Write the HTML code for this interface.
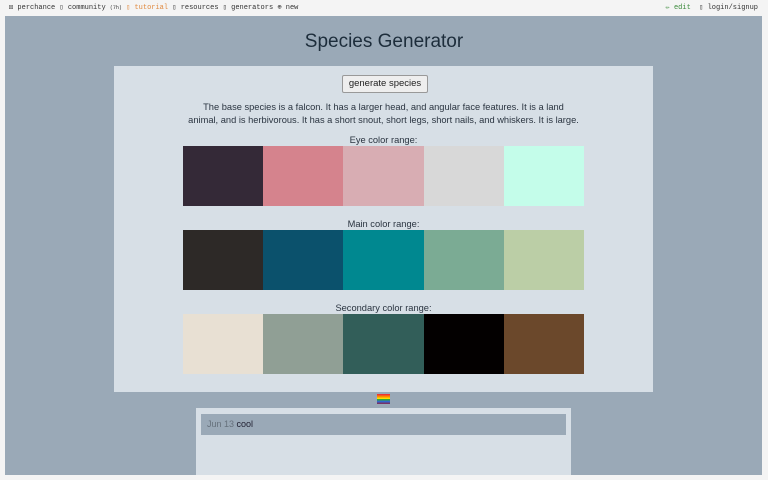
<!DOCTYPE html><html><head><style>
body{margin:0;width:768px;height:480px;background:#f4f4f4;font-family:"Liberation Sans",sans-serif;position:relative;overflow:hidden}
.nav{position:absolute;top:0;left:0;width:768px;height:16px;font-family:"Liberation Mono",monospace;font-size:7px;line-height:16px;color:#333;white-space:nowrap}
.nav span{white-space:nowrap}
.main{position:absolute;left:5px;top:16px;width:757px;height:459px;background:#9aa9b7}
h1{position:absolute;top:31px;left:0;width:768px;text-align:center;margin:0;font-weight:normal;font-size:19px;color:#1d2d3b}
.panel{position:absolute;left:114px;top:66px;width:539px;height:326px;background:#d7dfe6}
.btn{position:absolute;left:342px;top:75px;width:84px;height:16px;border:1px solid #999;background:#eee;border-radius:2px;font-size:9.5px;text-align:center;line-height:16px;color:#222}
.t{position:absolute;left:114px;width:539px;text-align:center;font-size:9.3px;color:#2a3440;line-height:13px}
.row{position:absolute;left:183px;display:flex;height:60px}
.row div{width:80.2px;height:60px}
</style></head><body>
<div class="nav"><span style="position:absolute;left:9px">⚄ perchance ▯ community <span style="font-size:5px">(7h)</span> <span style="color:#e08a40">▯ tutorial</span> ▯ resources ▯ generators ⊕ new</span><span style="position:absolute;right:10px"><span style="color:#3a8a3a">✏ edit</span> &nbsp;▯ login/signup</span></div>
<div class="main"></div>
<h1>Species Generator</h1>
<div class="panel"></div>
<div class="btn">generate species</div>
<div class="t" style="top:101px">The base species is a falcon. It has a larger head, and angular face features. It is a land<br>animal, and is herbivorous. It has a short snout, short legs, short nails, and whiskers. It is large.</div>
<div class="t" style="top:134px">Eye color range:</div>
<div class="row" style="top:146px"><div style="background:#342937"></div><div style="background:#d5838d"></div><div style="background:#d8adb3"></div><div style="background:#d8d8d8"></div><div style="background:#c4fdea"></div></div>
<div class="t" style="top:218px">Main color range:</div>
<div class="row" style="top:230px"><div style="background:#2d2927"></div><div style="background:#0b516c"></div><div style="background:#008890"></div><div style="background:#7bab94"></div><div style="background:#bbcea6"></div></div>
<div class="t" style="top:302px">Secondary color range:</div>
<div class="row" style="top:314px"><div style="background:#e8e0d3"></div><div style="background:#909f95"></div><div style="background:#325e59"></div><div style="background:#030000"></div><div style="background:#6b482b"></div></div>
<div style="position:absolute;left:377px;top:394px;width:13px;height:10px;background:linear-gradient(#e33 0 17%,#f80 17% 33%,#fd0 33% 50%,#3a3 50% 67%,#36c 67% 83%,#736 83%)"></div>
<div style="position:absolute;left:196px;top:408px;width:375px;height:67px;background:#d7dfe6"></div>
<div style="position:absolute;left:201px;top:414px;width:365px;height:21px;background:#9aa9b7;font-size:9px;line-height:21px;color:#223"><span style="margin-left:6px;color:#66717c">Jun 13</span> cool</div>
</body></html>
